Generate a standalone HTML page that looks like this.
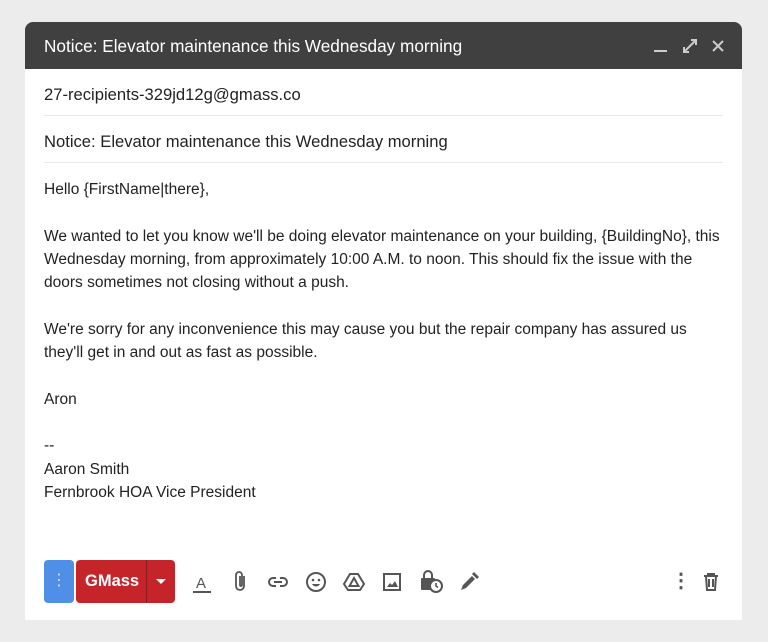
<!DOCTYPE html>
<html><head><style>
body{margin:0;width:768px;height:642px;background:#ececec;font-family:"Liberation Sans",Arial,sans-serif;position:relative;overflow:hidden}
.win{position:absolute;left:25px;top:22px;width:717px;height:598px;background:#fff;border-radius:8px 8px 0 0;overflow:hidden}
.hd{height:47px;background:#404040;color:#fff;font-size:17.2px;line-height:49px;padding-left:19px;position:relative}
.row{margin:0 19px;border-bottom:1px solid #e8e8e8;height:46px;line-height:52px;font-size:16.6px;color:#222}
.body{position:absolute;left:19px;top:156px;font-size:15.5px;line-height:23.3px;color:#222}
svg{position:absolute}
</style></head><body>
<div class="win">
<div class="hd">Notice: Elevator maintenance this Wednesday morning
<div style="position:absolute;left:629px;top:28px;width:13px;height:2px;background:#ccc"></div>
<svg style="left:657px;top:16px" width="16" height="16" viewBox="0 0 16 16"><path d="M2 14L14 2M9 2h5v5M2 9v5h5" stroke="#ccc" stroke-width="2" fill="none"/></svg>
<svg style="left:687px;top:18px" width="12" height="12" viewBox="0 0 12 12"><path d="M1 1L11 11M11 1L1 11" stroke="#ccc" stroke-width="2"/></svg>
</div>
<div class="row">27-recipients-329jd12g@gmass.co</div>
<div class="row">Notice: Elevator maintenance this Wednesday morning</div>
<div class="body">Hello {FirstName|there},<br><br>We wanted to let you know we'll be doing elevator maintenance on your building, {BuildingNo}, this<br>Wednesday morning, from approximately 10:00 A.M. to noon. This should fix the issue with the<br>doors sometimes not closing without a push.<br><br>We're sorry for any inconvenience this may cause you but the repair company has assured us<br>they'll get in and out as fast as possible.<br><br>Aron<br><br>--<br>Aaron Smith<br>Fernbrook HOA Vice President</div>
<div style="position:absolute;left:19px;top:538px;width:30px;height:43px;background:#4f8fe8;border-radius:4px;color:#dde;text-align:center;line-height:41px;font-size:16px">⋮</div>
<div style="position:absolute;left:51px;top:538px;width:99px;height:43px;background:#c5242b;border-radius:4px;color:#fff;font-size:16.5px;font-weight:bold;line-height:43px">
<span style="position:absolute;left:9px">GMass</span>
<div style="position:absolute;left:70px;top:0;width:1px;height:43px;background:#8e1a1f"></div>
<div style="position:absolute;left:80px;top:19px;border:5px solid transparent;border-top:5px solid #fff"></div></div>
<svg style="left:165px;top:549px" width="24" height="24" viewBox="0 0 24 24" fill="#555"><text x="6" y="17" font-size="15" font-family="Liberation Sans">A</text><rect x="3" y="20" width="18" height="2"/></svg>
<svg style="left:203px;top:548px" width="24" height="24" viewBox="0 0 24 24"><path d="M16 6v10a4 4 0 0 1-8 0V5a3 3 0 0 1 6 0v10a1 1 0 0 1-2 0V6" stroke="#555" stroke-width="1.8" fill="none"/></svg>
<svg style="left:241px;top:548px" width="24" height="24" viewBox="0 0 24 24"><path d="M10 8H7a4 4 0 0 0 0 8h3M14 8h3a4 4 0 0 1 0 8h-3M8 12h8" stroke="#555" stroke-width="2" fill="none"/></svg>
<svg style="left:279px;top:548px" width="24" height="24" viewBox="0 0 24 24"><circle cx="12" cy="12" r="9" stroke="#555" stroke-width="2" fill="none"/><circle cx="9" cy="10" r="1.3" fill="#555"/><circle cx="15" cy="10" r="1.3" fill="#555"/><path d="M8 14a4.5 4.5 0 0 0 8 0z" fill="#555"/></svg>
<svg style="left:317px;top:548px" width="24" height="24" viewBox="0 0 24 24"><path d="M8 4h8l6 10-4 6H6l-4-6z M12 8l4.5 8h-9z" stroke="#555" stroke-width="2" fill="none"/></svg>
<svg style="left:355px;top:548px" width="24" height="24" viewBox="0 0 24 24"><rect x="4" y="4" width="16" height="16" stroke="#555" stroke-width="2" fill="none"/><path d="M7 17l3-4 2 2 3-4 3 6z" fill="#555"/></svg>
<svg style="left:393px;top:546px" width="26" height="26" viewBox="0 0 26 26"><path d="M6 10V7a4 4 0 0 1 8 0v3" stroke="#555" stroke-width="2" fill="none"/><rect x="3" y="10" width="14" height="12" rx="1" fill="#555"/><circle cx="18" cy="18" r="6" fill="#fff" stroke="#555" stroke-width="2"/><path d="M18 15v3l2 1.5" stroke="#555" stroke-width="1.6" fill="none"/></svg>
<svg style="left:432px;top:548px" width="24" height="24" viewBox="0 0 24 24"><path d="M4 20l2-5 9-9 3 3-9 9z M15 4l2-2 5 5-2 2z" fill="#555"/></svg>
<div style="position:absolute;left:646px;top:546px;color:#555;font-size:20px;font-weight:bold">⋮</div>
<svg style="left:674px;top:548px" width="24" height="24" viewBox="0 0 24 24"><path d="M5 6h14M9 6V4h6v2M7 6l1 14h8l1-14M10 9v8M14 9v8" stroke="#555" stroke-width="2" fill="none"/></svg>
</div>
</body></html>
